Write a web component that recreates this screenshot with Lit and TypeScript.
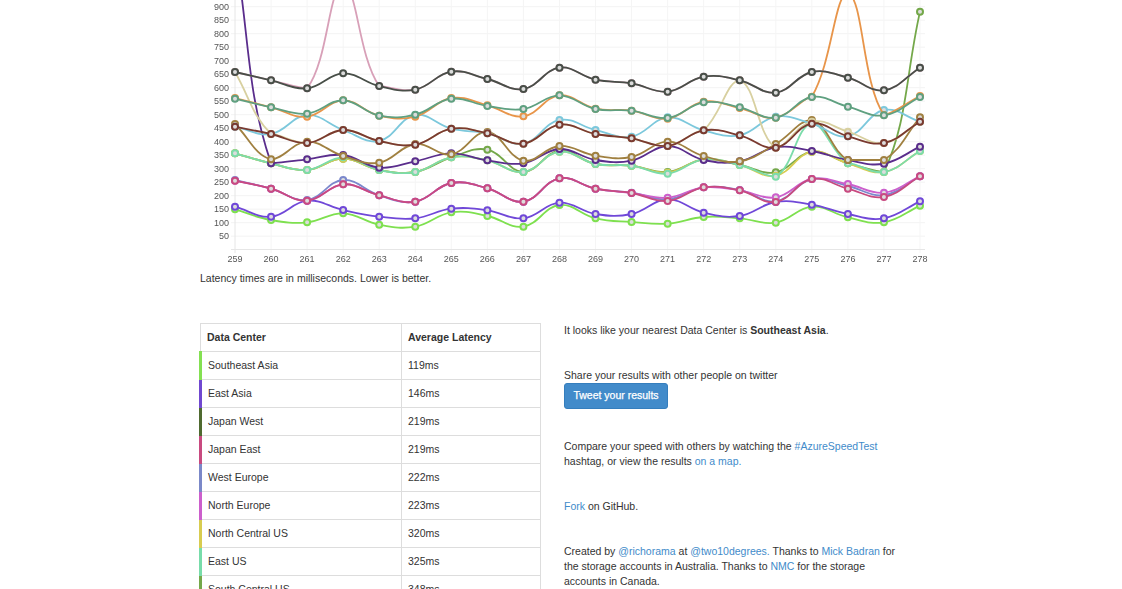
import { LitElement, html, css, svg } from "lit";
import { customElement } from "lit/decorators.js";

// y is traced chart position: pixel * 3
type Series = { c: string; y: number[] };
const SERIES: Series[] = [
  { c: "#7ee04f", y: [628,660,667,640,674,680,637,648,680,615,655,666,671,651,655,668,620,652,667,617] },
  { c: "#7048d8", y: [620,650,602,630,650,655,626,631,655,608,642,642,598,638,648,606,614,642,655,604] },
  { c: "#7b88cc", y: [540,566,600,540,586,605,549,565,605,535,566,578,598,562,570,604,537,558,585,529] },
  { c: "#cc5fcc", y: [542,566,602,553,586,605,549,565,605,535,566,579,593,562,571,592,537,552,578,529] },
  { c: "#c84a80", y: [542,566,602,553,586,605,549,565,605,535,566,579,603,562,571,606,537,566,591,529] },
  { c: "#74a84a", y: [460,490,510,476,510,516,472,449,516,452,492,497,516,478,495,517,455,490,516,35] },
  { c: "#d8cc50", y: [460,490,510,476,510,516,472,481,516,455,492,497,518,478,495,527,455,490,516,453] },
  { c: "#7bdcaa", y: [460,490,510,472,510,516,472,481,516,455,492,497,521,478,495,530,370,490,516,453] },
  { c: "#5a2d8c", y: [-150,490,478,465,503,484,460,481,490,447,480,482,438,480,484,442,453,480,491,440] },
  { c: "#a08040", y: [372,478,425,468,488,432,463,396,482,438,467,471,425,468,484,432,360,480,480,352] },
  { c: "#7cc8dc", y: [380,402,345,390,423,345,386,400,431,360,390,410,352,391,406,350,371,409,330,365] },
  { c: "#d8d0a0", y: [216,402,429,390,423,434,386,400,431,374,402,415,438,391,241,443,365,395,429,365] },
  { c: "#7a3a30", y: [380,402,429,390,423,434,386,400,431,374,402,415,438,391,406,443,371,409,429,365] },
  { c: "#e8954a", y: [294,322,350,301,347,350,294,316,349,286,326,332,356,305,324,353,290,-20,345,288] },
  { c: "#5fa080", y: [296,322,341,301,347,344,296,318,327,286,327,332,354,307,322,353,291,320,346,291] },
  { c: "#d8a0b8", y: [216,241,265,-45,258,269,215,237,267,203,239,250,275,230,241,278,216,233,271,203] },
  { c: "#484f48", y: [216,241,265,220,258,269,215,237,267,203,239,250,275,230,241,278,216,233,271,203] },
];

const X0 = 235;
const STEP = 685 / 19;
const xAt = (i: number) => X0 + i * STEP;
const SPIKE = 30;

// Chart.js style spline, tension 0.4, with overshoot removed next to spikes
function spline(pts: [number, number][]) {
  const t = 0.4;
  const cps = pts.map((p, i) => {
    const a = pts[Math.max(i - 1, 0)];
    const b = pts[Math.min(i + 1, pts.length - 1)];
    const d01 = Math.hypot(p[0] - a[0], p[1] - a[1]);
    const d12 = Math.hypot(b[0] - p[0], b[1] - p[1]);
    const sum = d01 + d12 || 1;
    const fa = (t * d01) / sum;
    const fb = (t * d12) / sum;
    let py = p[1] - fa * (b[1] - a[1]);
    let ny = p[1] + fb * (b[1] - a[1]);
    if (Math.abs(a[1] - p[1]) > SPIKE && Math.abs(b[1] - p[1]) <= SPIKE) ny = p[1];
    if (Math.abs(b[1] - p[1]) > SPIKE && Math.abs(a[1] - p[1]) <= SPIKE) py = p[1];
    if (Math.abs(a[1] - p[1]) > SPIKE && (ny - p[1]) * (b[1] - p[1]) < 0) ny = p[1];
    if (Math.abs(b[1] - p[1]) > SPIKE && (py - p[1]) * (a[1] - p[1]) < 0) py = p[1];
    return {
      px: p[0] - fa * (b[0] - a[0]),
      py,
      nx: p[0] + fb * (b[0] - a[0]),
      ny,
    };
  });
  let d = `M${pts[0][0]} ${pts[0][1]}`;
  for (let i = 1; i < pts.length; i++) {
    d += `C${cps[i - 1].nx} ${cps[i - 1].ny} ${cps[i].px} ${cps[i].py} ${pts[i][0]} ${pts[i][1]}`;
  }
  return d;
}

const Y_TICKS = Array.from({ length: 18 }, (_, i) => 900 - i * 50);
const yTick = (v: number) => 6.7 + (900 - v) * 0.27;

const ROWS: [string, string, string][] = [
  ["Southeast Asia", "119ms", "#84e052"],
  ["East Asia", "146ms", "#7048d0"],
  ["Japan West", "219ms", "#4f6a30"],
  ["Japan East", "219ms", "#c84a80"],
  ["West Europe", "222ms", "#7b88c8"],
  ["North Europe", "223ms", "#cc5fcc"],
  ["North Central US", "320ms", "#d8cc50"],
  ["East US", "325ms", "#78dcaa"],
  ["South Central US", "348ms", "#74a84a"],
];

@customElement("app-root")
export class AppRoot extends LitElement {
  static styles = css`
    :host {
      display: block;
      width: 1122px;
      height: 589px;
      overflow: hidden;
      background: #fff;
      color: #333;
      font: 10.5px/15px "Liberation Sans", Arial, sans-serif;
    }
    .page {
      padding-left: 200px;
      display: flex;
      flex-direction: column;
    }
    .chart {
      display: block;
      width: 730px;
      height: 265px;
      margin-bottom: 5.5px;
      filter: blur(0.4px);
    }
    .chart text {
      font: 9px "Liberation Sans", Arial, sans-serif;
      fill: #555;
    }
    .caption {
      margin: 0 0 37.5px;
    }
    .columns {
      display: flex;
      gap: 23px;
      align-items: flex-start;
      margin-left: -1px;
    }
    table {
      width: 342px;
      flex: none;
      table-layout: fixed;
      border-collapse: collapse;
    }
    th,
    td {
      height: 28px;
      padding: 0 6px;
      border: 1px solid #ddd;
      text-align: left;
      box-sizing: border-box;
    }
    th:first-child,
    td:first-child {
      width: 201px;
    }
    td:first-child {
      border-left-width: 3px;
    }
    .side {
      width: 335px;
      display: flex;
      flex-direction: column;
      gap: 30px;
    }
    .side p {
      margin: 0;
    }
    a {
      color: #428bca;
      text-decoration: none;
    }
    .btn {
      display: block;
      width: 104px;
      box-sizing: border-box;
      height: 26px;
      line-height: 23px;
      text-align: center;
      border: 1px solid #357ebd;
      border-radius: 3px;
      background: #428bca;
      color: #fff;
      -webkit-text-stroke: 0.25px #fff;
    }
  `;

  render() {
    return html`
      <div class="page">
        <svg class="chart" viewBox="200 0 730 265">
          ${Y_TICKS.map(
            (v) => svg`<line x1="231" x2="925" y1=${yTick(v)} y2=${yTick(v)} stroke="#f3f3f3"></line>
              <text x="229" y=${yTick(v) + 3.2} text-anchor="end">${v}</text>`
          )}
          ${SERIES[0].y.map(
            (_, i) => svg`<line x1=${xAt(i)} x2=${xAt(i)} y1="0" y2="253" stroke=${i === 0 ? "#e6e6e6" : "#f5f5f5"}></line>
              <text x=${xAt(i)} y="261.5" text-anchor="middle">${259 + i}</text>`
          )}
          <line x1="231" x2="925" y1="249.5" y2="249.5" stroke="#e6e6e6"></line>
          ${SERIES.map((s) => {
            const pts = s.y.map((y, i) => [xAt(i), y / 3] as [number, number]);
            return svg`<path d=${spline(pts)} fill="none" stroke=${s.c} stroke-width="1.8"></path>
              ${pts.map((p) => svg`<circle cx=${p[0]} cy=${p[1]} r="3" fill="#dcdcdc" stroke=${s.c} stroke-width="2"></circle>`)}`;
          })}
        </svg>
        <p class="caption">Latency times are in milliseconds. Lower is better.</p>
        <div class="columns">
          <table>
            <thead>
              <tr><th>Data Center</th><th>Average Latency</th></tr>
            </thead>
            <tbody>
              ${ROWS.map(
                (r) => html`<tr>
                  <td style="border-left-color:${r[2]}">${r[0]}</td>
                  <td>${r[1]}</td>
                </tr>`
              )}
            </tbody>
          </table>
          <div class="side">
            <p>It looks like your nearest Data Center is <b>Southeast Asia</b>.</p>
            <div>
              <p>Share your results with other people on twitter</p>
              <a class="btn" href="#">Tweet your results</a>
            </div>
            <p>Compare your speed with others by watching the <a href="#">#AzureSpeedTest</a> hashtag, or view the results <a href="#">on a map.</a></p>
            <p><a href="#">Fork</a> on GitHub.</p>
            <p>Created by <a href="#">@richorama</a> at <a href="#">@two10degrees.</a> Thanks to <a href="#">Mick Badran</a> for the storage accounts in Australia. Thanks to <a href="#">NMC</a> for the storage accounts in Canada.</p>
          </div>
        </div>
      </div>
    `;
  }
}
